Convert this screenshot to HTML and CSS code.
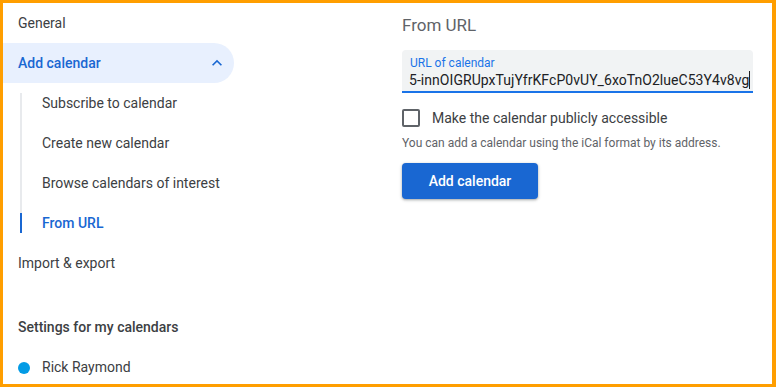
FILE: index.html
```html
<!DOCTYPE html>
<html lang="en">
<head>
<meta charset="utf-8">
<title>Settings - From URL</title>
<link rel="stylesheet" href="styles.css">
</head>
<body>
<div class="frame">
  <nav class="sidebar">
    <div class="nav-item">General</div>
    <div class="nav-item nav-open">
      <span>Add calendar</span>
      <svg class="chev" width="20" height="20" viewBox="0 0 24 24"><path d="M12 8l-6 6 1.41 1.41L12 10.83l4.59 4.58L18 14z" fill="#1967d2"/></svg>
    </div>
    <div class="sub-list">
      <div class="sub-item">Subscribe to calendar</div>
      <div class="sub-item">Create new calendar</div>
      <div class="sub-item">Browse calendars of interest</div>
      <div class="sub-item sub-active">From URL</div>
    </div>
    <div class="nav-item">Import &amp; export</div>
    <div class="spacer"></div>
    <div class="nav-item nav-head">Settings for my calendars</div>
    <div class="cal-item"><span class="dot"></span><span>Rick Raymond</span></div>
  </nav>
  <main class="main">
    <h1 class="title">From URL</h1>
    <div class="field">
      <div class="field-label">URL of calendar</div>
      <div class="field-value">5-innOIGRUpxTujYfrKFcP0vUY_6xoTnO2lueC53Y4v8vg<span class="caret"></span></div>
    </div>
    <label class="check-row"><span class="box"></span><span>Make the calendar publicly accessible</span></label>
    <p class="hint">You can add a calendar using the iCal format by its address.</p>
    <button class="btn">Add calendar</button>
  </main>
</div>
</body>
</html>
```
FILE: styles.css
```css
* { box-sizing: border-box; }
html, body { margin: 0; padding: 0; background: #fff; }
body { font-family: Roboto, "Noto Sans", Arial, sans-serif; color: #3c4043; }
.frame {
  width: 776px;
  height: 387px;
  border: 3px solid #ff9e00;
  border-right-width: 4px;
  display: grid;
  grid-template-columns: 231px 1fr;
  overflow: hidden;
}
.sidebar { display: flex; flex-direction: column; }
.nav-item {
  height: 40px;
  display: flex;
  align-items: center;
  padding-left: 15px;
  font-size: 14px;
  color: #3c4043;
}
.nav-open {
  background: #e8f0fe;
  color: #1967d2;
  font-weight: 500;
  border-radius: 0 20px 20px 0;
  justify-content: space-between;
  padding-right: 7px;
}
.chev { display: block; }
.sub-list { position: relative; margin-left: 17px; }
.sub-list::before {
  content: "";
  position: absolute;
  left: 0;
  top: 10px;
  bottom: 10px;
  width: 2px;
  background: #e8eaed;
}
.sub-item {
  position: relative;
  height: 40px;
  display: flex;
  align-items: center;
  padding-left: 22px;
  font-size: 14px;
  color: #3c4043;
}
.sub-active { color: #1967d2; font-weight: 500; }
.sub-active::before {
  content: "";
  position: absolute;
  left: 0;
  top: 10px;
  height: 20px;
  width: 2px;
  background: #1967d2;
}
.spacer { height: 24px; }
.nav-head { font-weight: 500; }
.cal-item {
  height: 40px;
  display: flex;
  align-items: center;
  padding-left: 15px;
  font-size: 14px;
  gap: 12px;
}
.dot { width: 12px; height: 12px; border-radius: 50%; background: #039be5; margin-top: 1px; }
.main { padding-left: 168px; padding-top: 12px; }
.title {
  margin: 0 0 15px;
  font-size: 17px;
  font-weight: 400;
  color: #5f6368;
  line-height: 20px;
}
.field {
  width: 351px;
  height: 43px;
  background: #f1f3f4;
  border-radius: 4px 4px 0 0;
  border-bottom: 2px solid #1a73e8;
  padding: 6px 0 0 7px;
}
.field-label { font-size: 12px; color: #1a73e8; line-height: 14px; padding-left: 1px; }
.field-value { font-size: 14px; color: #202124; line-height: 20px; white-space: nowrap; letter-spacing: 0.05px; }
.caret { display: inline-block; width: 1px; height: 18px; background: #202124; vertical-align: -4px; }
.check-row {
  display: flex;
  align-items: center;
  gap: 12px;
  margin-top: 16px;
  font-size: 14px;
  color: #3c4043;
}
.box { width: 18px; height: 18px; border: 2px solid #5f6368; border-radius: 2px; }
.hint { margin: 8px 0 12px; font-size: 12px; color: #5f6368; line-height: 16px; }
.btn {
  width: 136px;
  height: 36px;
  border: 0;
  border-radius: 4px;
  background: #1967d2;
  color: #fff;
  font-family: Roboto, "Noto Sans", Arial, sans-serif;
  font-size: 14px;
  font-weight: 500;
  box-shadow: 0 1px 2px rgba(60,64,67,.3), 0 1px 3px 1px rgba(60,64,67,.15);
}
```
